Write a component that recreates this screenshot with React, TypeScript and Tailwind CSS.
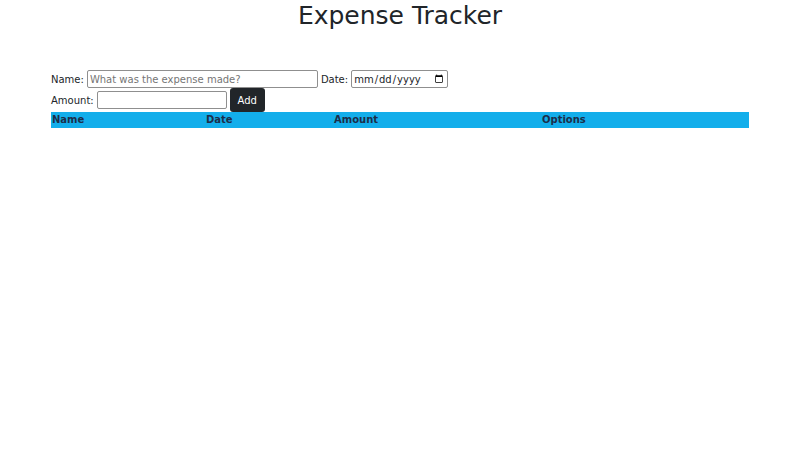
import React, { useState } from 'react';

type Expense = { name: string; date: string; amount: string };

const App: React.FC = () => {
  const [expenses, setExpenses] = useState<Expense[]>([]);
  const [form, setForm] = useState<Expense>({ name: '', date: '', amount: '' });

  const addExpense = () => {
    if (!form.name) return;
    setExpenses([...expenses, form]);
    setForm({ name: '', date: '', amount: '' });
  };

  return (
    <div className="min-h-screen bg-white text-[#212529] font-['DejaVu_Sans',sans-serif]">
      <h1 className="text-center text-[25px] leading-[30px] pt-[1px]">Expense Tracker</h1>

      <div className="mx-auto w-[698px] mt-[39px] text-[10px]">
        <div className="flex items-center h-[18px]">
          <label>Name:</label>
          <input
            type="text"
            value={form.name}
            onChange={(e) => setForm({ ...form, name: e.target.value })}
            placeholder="What was the expense made?"
            className="ml-[3px] w-[231px] h-[18px] border border-[#8f8f8f] rounded-[2px] px-[2px] text-[10px] placeholder:text-[#757575]"
          />
          <label className="ml-[3px]">Date:</label>
          <input
            type="date"
            value={form.date}
            onChange={(e) => setForm({ ...form, date: e.target.value })}
            className="ml-[3px] w-[97px] h-[18px] border border-[#8f8f8f] rounded-[2px] px-[1px] text-[10px]"
          />
        </div>
        <div className="flex items-center h-[24px]">
          <label>Amount:</label>
          <input
            type="number"
            value={form.amount}
            onChange={(e) => setForm({ ...form, amount: e.target.value })}
            className="ml-[3px] w-[130px] h-[18px] border border-[#8f8f8f] rounded-[2px] px-[2px] text-[10px]"
          />
          <button
            onClick={addExpense}
            className="ml-[3px] h-[24px] w-[35px] rounded-[3px] bg-[#212529] text-white text-[10px]"
          >
            Add
          </button>
        </div>

        <table className="w-full border-collapse">
          <thead>
            <tr className="bg-[#13aeeb] text-[#1b2e4a] text-left font-bold h-[16px] leading-[16px]">
              <th className="w-[155px] p-0 pl-[1px]">Name</th>
              <th className="w-[128px] p-0">Date</th>
              <th className="w-[208px] p-0">Amount</th>
              <th className="p-0">Options</th>
            </tr>
          </thead>
          <tbody>
            {expenses.map((x, i) => (
              <tr key={i}>
                <td>{x.name}</td>
                <td>{x.date}</td>
                <td>{x.amount}</td>
                <td />
              </tr>
            ))}
          </tbody>
        </table>
      </div>
    </div>
  );
};

export default App;
